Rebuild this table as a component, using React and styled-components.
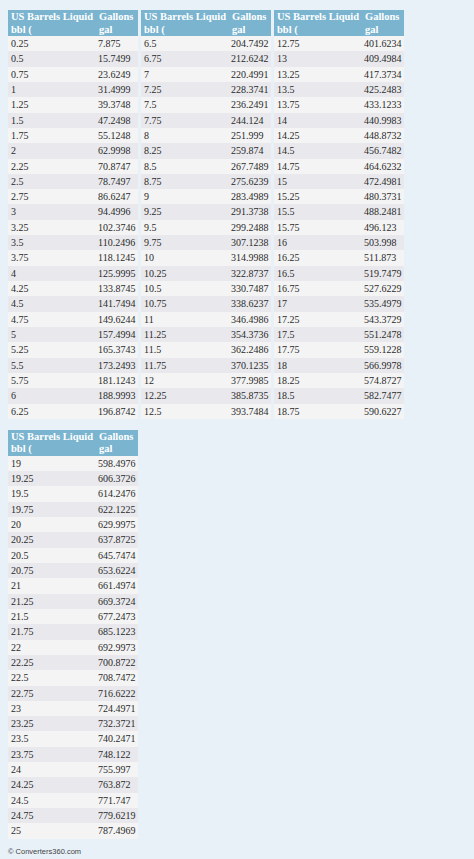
import styled, { createGlobalStyle } from 'styled-components';

const GlobalStyle = createGlobalStyle`
    html, body {
        margin: 0;
        padding: 0;
        background: #e8f1f8;
        min-height: 100%;
    }

    * {
        box-sizing: border-box;
    }
`

const Page = styled.div`
    padding: 10px 8px 4px 8px;
    font-family: "Liberation Serif", "DejaVu Serif", serif;
`

const TableWrap = styled.div`
    display: flex;
    flex-wrap: wrap;
    gap: 11px 3px;
    align-items: flex-start;
`

const Table = styled.table`
    width: 130px;
    border-collapse: collapse;
    border-spacing: 0;
    table-layout: fixed;
`

const HeadCell = styled.th`
    background: #7ab4cf;
    color: #fff;
    font-weight: 700;
    font-size: 10.5px;
    line-height: 12.5px;
    text-align: left;
    vertical-align: top;
    padding: ${props => props.first ? '1px 0 0 3px' : '1px 0 0 2px'};
    height: ${props => props.tall ? '26px' : '25px'};
    white-space: nowrap;
    overflow: hidden;
`

const HeadLine = styled.div`
    text-align: left;
`

const Row = styled.tr`
    background: ${props => props.odd ? '#e9e9ed' : '#f4f4f4'};
`

const Cell = styled.td`
    font-size: 10px;
    color: #2a2a2a;
    height: 15.32px;
    line-height: 15.32px;
    padding: ${props => props.first ? '0 0 0 3px' : '0 0 0 1px'};
    white-space: nowrap;
    overflow: hidden;
    text-align: left;
`

const Footer = styled.div`
    font-family: "Liberation Sans", Arial, sans-serif;
    font-size: 7.5px;
    color: #444;
    margin-top: 8px;
`

const tables = [
    [
        ['0.25', '7.875'], ['0.5', '15.7499'], ['0.75', '23.6249'], ['1', '31.4999'], ['1.25', '39.3748'],
        ['1.5', '47.2498'], ['1.75', '55.1248'], ['2', '62.9998'], ['2.25', '70.8747'], ['2.5', '78.7497'],
        ['2.75', '86.6247'], ['3', '94.4996'], ['3.25', '102.3746'], ['3.5', '110.2496'], ['3.75', '118.1245'],
        ['4', '125.9995'], ['4.25', '133.8745'], ['4.5', '141.7494'], ['4.75', '149.6244'], ['5', '157.4994'],
        ['5.25', '165.3743'], ['5.5', '173.2493'], ['5.75', '181.1243'], ['6', '188.9993'], ['6.25', '196.8742'],
    ],
    [
        ['6.5', '204.7492'], ['6.75', '212.6242'], ['7', '220.4991'], ['7.25', '228.3741'], ['7.5', '236.2491'],
        ['7.75', '244.124'], ['8', '251.999'], ['8.25', '259.874'], ['8.5', '267.7489'], ['8.75', '275.6239'],
        ['9', '283.4989'], ['9.25', '291.3738'], ['9.5', '299.2488'], ['9.75', '307.1238'], ['10', '314.9988'],
        ['10.25', '322.8737'], ['10.5', '330.7487'], ['10.75', '338.6237'], ['11', '346.4986'], ['11.25', '354.3736'],
        ['11.5', '362.2486'], ['11.75', '370.1235'], ['12', '377.9985'], ['12.25', '385.8735'], ['12.5', '393.7484'],
    ],
    [
        ['12.75', '401.6234'], ['13', '409.4984'], ['13.25', '417.3734'], ['13.5', '425.2483'], ['13.75', '433.1233'],
        ['14', '440.9983'], ['14.25', '448.8732'], ['14.5', '456.7482'], ['14.75', '464.6232'], ['15', '472.4981'],
        ['15.25', '480.3731'], ['15.5', '488.2481'], ['15.75', '496.123'], ['16', '503.998'], ['16.25', '511.873'],
        ['16.5', '519.7479'], ['16.75', '527.6229'], ['17', '535.4979'], ['17.25', '543.3729'], ['17.5', '551.2478'],
        ['17.75', '559.1228'], ['18', '566.9978'], ['18.25', '574.8727'], ['18.5', '582.7477'], ['18.75', '590.6227'],
    ],
    [
        ['19', '598.4976'], ['19.25', '606.3726'], ['19.5', '614.2476'], ['19.75', '622.1225'], ['20', '629.9975'],
        ['20.25', '637.8725'], ['20.5', '645.7474'], ['20.75', '653.6224'], ['21', '661.4974'], ['21.25', '669.3724'],
        ['21.5', '677.2473'], ['21.75', '685.1223'], ['22', '692.9973'], ['22.25', '700.8722'], ['22.5', '708.7472'],
        ['22.75', '716.6222'], ['23', '724.4971'], ['23.25', '732.3721'], ['23.5', '740.2471'], ['23.75', '748.122'],
        ['24', '755.997'], ['24.25', '763.872'], ['24.5', '771.747'], ['24.75', '779.6219'], ['25', '787.4969'],
    ],
]

function ConversionTable({ rows, tall }) {
    return (
        <Table>
            <colgroup>
                <col style={{ width: '89px' }} />
                <col style={{ width: '41px' }} />
            </colgroup>
            <thead>
                <tr>
                    <HeadCell first tall={tall}>
                        <HeadLine>US Barrels Liquid</HeadLine>
                        <HeadLine>bbl (</HeadLine>
                    </HeadCell>
                    <HeadCell tall={tall}>
                        <HeadLine>Gallons</HeadLine>
                        <HeadLine>gal</HeadLine>
                    </HeadCell>
                </tr>
            </thead>
            <tbody>
                {rows.map(([bbl, gal], ind) => (
                    <Row odd={ind % 2 === 1} key={`r${ind}`}>
                        <Cell first>{bbl}</Cell>
                        <Cell>{gal}</Cell>
                    </Row>
                ))}
            </tbody>
        </Table>
    )
}

function App() {
    return (
        <Page>
            <GlobalStyle />
            <TableWrap>
                {tables.map((rows, ind) => (
                    <ConversionTable rows={rows} tall={ind < 3} key={`t${ind}`} />
                ))}
            </TableWrap>
            <Footer>© Converters360.com</Footer>
        </Page>
    )
}

export default App;
